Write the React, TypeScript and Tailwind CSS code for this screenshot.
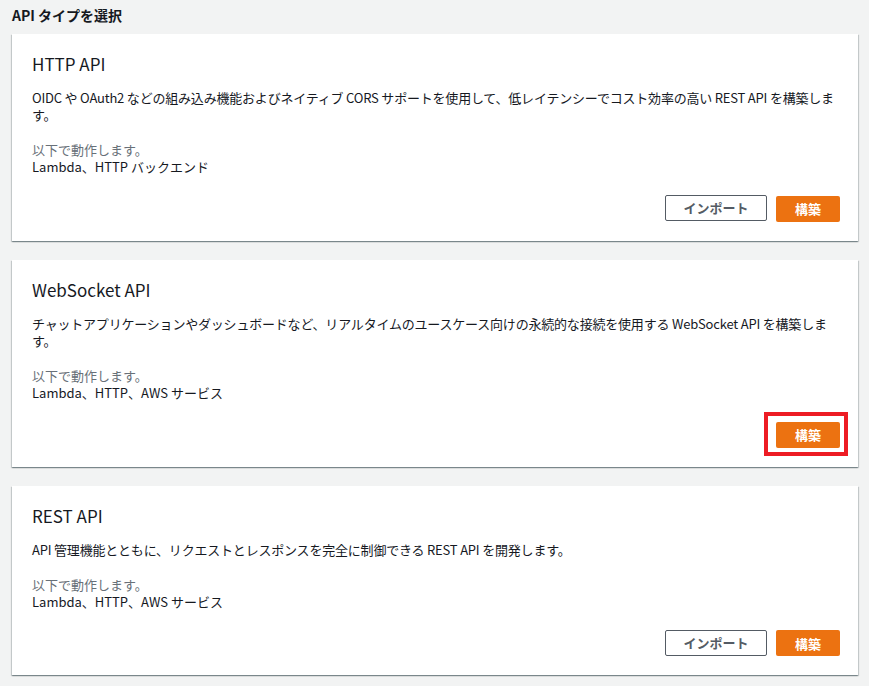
import React from "react";

function Card({
  title,
  desc,
  works,
  showImport,
  highlight,
}: {
  title: string;
  desc: string;
  works: string;
  showImport: boolean;
  highlight?: boolean;
}) {
  return (
    <div className="bg-white pl-5 pr-[18px] pt-5 pb-[19px] shadow-[0_1px_1px_0_rgba(0,28,36,0.3),1px_1px_1px_0_rgba(0,28,36,0.15),-1px_1px_1px_0_rgba(0,28,36,0.15)]">
      <div className="text-[17px] leading-5 text-[#16191f]">{title}</div>
      <div className="mt-[15px] text-[13px] leading-[17px] tracking-[-0.2px] text-[#16191f]">{desc}</div>
      <div className="mt-[18px] text-[13px] leading-[17px]">
        <div className="text-[#687078]">以下で動作します。</div>
        <div className="text-[#16191f]">{works}</div>
      </div>
      <div className="mt-[20px] flex justify-end gap-[9px]">
        {showImport && (
          <button className="h-[26px] w-[102px] rounded-[2px] border border-[#545b64] bg-white text-[13px] font-bold text-[#545b64]">
            インポート
          </button>
        )}
        <div className="relative">
          <button className="h-[26px] w-[64px] rounded-[2px] bg-[#ec7211] text-[13px] font-bold text-white">
            構築
          </button>
          {highlight && (
            <div className="pointer-events-none absolute -left-[12px] -right-[8px] -top-[9px] -bottom-[8px] border-4 border-[#ed1c24]" />
          )}
        </div>
      </div>
    </div>
  );
}

export default function App() {
  return (
    <div className="min-h-[686px] bg-[#f2f3f3] pl-[12px] pr-[11px] font-['Noto_Sans_CJK_JP','Noto_Sans',sans-serif]">
      <div className="h-[34px] pt-[5px] text-[14px] font-bold leading-5 text-[#16191f]">
        API タイプを選択
      </div>
      <div className="flex flex-col gap-[19px]">
        <Card
          title="HTTP API"
          desc="OIDC や OAuth2 などの組み込み機能およびネイティブ CORS サポートを使用して、低レイテンシーでコスト効率の高い REST API を構築します。"
          works="Lambda、HTTP バックエンド"
          showImport
        />
        <Card
          title="WebSocket API"
          desc="チャットアプリケーションやダッシュボードなど、リアルタイムのユースケース向けの永続的な接続を使用する WebSocket API を構築します。"
          works="Lambda、HTTP、AWS サービス"
          showImport={false}
          highlight
        />
        <Card
          title="REST API"
          desc="API 管理機能とともに、リクエストとレスポンスを完全に制御できる REST API を開発します。"
          works="Lambda、HTTP、AWS サービス"
          showImport
        />
      </div>
    </div>
  );
}
